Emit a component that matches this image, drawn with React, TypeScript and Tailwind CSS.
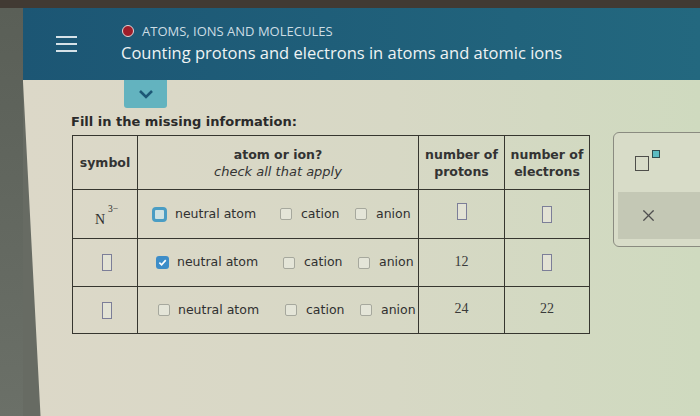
import { X } from "lucide-react";

const Box = () => (
  <div className="w-[10px] h-[17px] border-[1.5px] border-[#7c7e98] bg-[#e3e3d5]" />
);

const Unchecked = () => (
  <div className="w-[12px] h-[12px] rounded-[2px] border border-[#a6a89d] bg-[#e4e5d8]" />
);

const Checked = () => (
  <div className="w-[13px] h-[13px] rounded-[3px] bg-[#3d8dc8] flex items-center justify-center">
    <svg width="9" height="9" viewBox="0 0 10 10">
      <path d="M1.5 5.2 L4 7.6 L8.6 2.4" stroke="#fff" strokeWidth="1.8" fill="none" />
    </svg>
  </div>
);

const Focused = () => (
  <div className="w-[15px] h-[15px] -ml-[1px] rounded-[4px] border-[3px] border-[#4a9dc4] bg-[#cfe2e2]" />
);

const Options = ({ first }: { first: "checked" | "focused" | "none" }) => (
  <div className="flex items-center text-[12.5px] text-[#303030]">
    <div className="w-[127px] flex items-center gap-[8px]">
      {first === "checked" ? <Checked /> : first === "focused" ? <Focused /> : <Unchecked />}
      <span>neutral atom</span>
    </div>
    <div className="w-[75px] flex items-center gap-[9px]">
      <Unchecked />
      <span>cation</span>
    </div>
    <div className="flex items-center gap-[9px]">
      <Unchecked />
      <span>anion</span>
    </div>
  </div>
);

const Num = ({ v }: { v: string }) => (
  <span className="text-[14px] text-[#3a3a3a]" style={{ fontFamily: '"Liberation Serif", serif' }}>
    {v}
  </span>
);

export default function App() {
  const cell = "border border-[#36362f] p-0";
  return (
    <div
      className="w-[700px] h-[416px] overflow-hidden flex flex-col bg-[#6a6e66]"
      style={{ fontFamily: '"DejaVu Sans", Verdana, sans-serif' }}
    >
      <div className="h-[8px] shrink-0 bg-[#413a33]" />
      <div className="flex flex-1 min-h-0">
        <div className="w-[23px] shrink-0 bg-linear-to-b from-[#5a5f57] to-[#6b7068]" />
        <div className="flex-1 min-w-0 overflow-hidden flex flex-col">
          {/* header */}
          <header
            className="h-[72px] shrink-0 flex items-center pl-[33px] bg-linear-to-r from-[#1c5674] to-[#23687f]"
            style={{ fontFamily: '"Open Sans", sans-serif' }}
          >
            <div className="flex flex-col gap-[5px] w-[21px]">
              <div className="h-[2px] bg-[#d6e2e8]" />
              <div className="h-[2px] bg-[#d6e2e8]" />
              <div className="h-[2px] bg-[#d6e2e8]" />
            </div>
            <div className="ml-[45px] flex flex-col gap-[3px] -mt-[2px]">
              <div className="flex items-center leading-[16px]">
                <div className="w-[12px] h-[12px] rounded-full border-[1.5px] border-[#e6d6d6] bg-[#9e1d2a]" />
                <span className="ml-[8px] text-[13px] text-[#cddde4]">
                  ATOMS, IONS AND MOLECULES
                </span>
              </div>
              <div className="text-[16.5px] leading-[22px] text-[#eef3f4] -ml-[1px]">
                Counting protons and electrons in atoms and atomic ions
              </div>
            </div>
          </header>

          {/* content */}
          <main className="flex-1 flex flex-col bg-[linear-gradient(87deg,#676b63_17px,transparent_18px),linear-gradient(to_right,#dcd8c8,#d7d8c5_55%,#cfdabf)]">
            <div className="ml-[101px] w-[43px] h-[28px] rounded-b-[3px] bg-[#63b3bf] flex items-center justify-center">
              <svg width="16" height="10" viewBox="0 0 16 10">
                <path d="M2 2 L8 8 L14 2" stroke="#1d5876" strokeWidth="2.6" fill="none" />
              </svg>
            </div>
            <div className="ml-[48px] mt-[6px] text-[13px] leading-[16px] font-bold text-[#2a2a2a]">
              Fill in the missing information:
            </div>

            <div className="flex items-start ml-[49px] mt-[2px]">
              <table className="mt-[3px] w-[517px] shrink-0 table-fixed border-collapse text-[#333] text-center">
                <colgroup>
                  <col className="w-[65px]" />
                  <col className="w-[281px]" />
                  <col className="w-[86px]" />
                  <col className="w-[85px]" />
                </colgroup>
                <thead>
                  <tr className="h-[54px] text-[12.5px] font-bold leading-[17px]">
                    <th className={cell}>symbol</th>
                    <th className={cell}>
                      <div>atom or ion?</div>
                      <div className="italic font-normal text-[13px]">check all that apply</div>
                    </th>
                    <th className={`${cell} whitespace-nowrap`}>
                      number of
                      <br />
                      protons
                    </th>
                    <th className={`${cell} whitespace-nowrap`}>
                      number of
                      <br />
                      electrons
                    </th>
                  </tr>
                </thead>
                <tbody>
                  <tr className="h-[49px]">
                    <td className={cell}>
                      <div className="flex justify-center items-start pt-[4px] pl-[3px]" style={{ fontFamily: '"Liberation Serif", serif' }}>
                        <span className="text-[14px] text-[#2e2e2e] mt-[7px]">N</span>
                        <span className="text-[9.5px] ml-[3px] text-[#2e2e2e]">3−</span>
                      </div>
                    </td>
                    <td className={`${cell} pl-[15px]`}>
                      <Options first="focused" />
                    </td>
                    <td className={cell}>
                      <div className="flex justify-center -mt-[6px]">
                        <Box />
                      </div>
                    </td>
                    <td className={cell}>
                      <div className="flex justify-center">
                        <Box />
                      </div>
                    </td>
                  </tr>
                  <tr className="h-[48px]">
                    <td className={cell}>
                      <div className="flex justify-center pl-[3px]">
                        <Box />
                      </div>
                    </td>
                    <td className={`${cell} pl-[18px]`}>
                      <Options first="checked" />
                    </td>
                    <td className={cell}>
                      <div className="-mt-[4px]">
                        <Num v="12" />
                      </div>
                    </td>
                    <td className={cell}>
                      <div className="flex justify-center">
                        <Box />
                      </div>
                    </td>
                  </tr>
                  <tr className="h-[47px]">
                    <td className={cell}>
                      <div className="flex justify-center pl-[4px]">
                        <Box />
                      </div>
                    </td>
                    <td className={`${cell} pl-[20px]`}>
                      <Options first="none" />
                    </td>
                    <td className={cell}>
                      <div className="-mt-[4px]">
                        <Num v="24" />
                      </div>
                    </td>
                    <td className={cell}>
                      <div className="-mt-[4px]">
                        <Num v="22" />
                      </div>
                    </td>
                  </tr>
                </tbody>
              </table>

              {/* answer tools panel */}
              <div className="ml-[23px] w-[130px] shrink-0 rounded-[6px] border border-[#8a8b80] bg-[#d8dcc8] pt-[17px] pb-[7px]">
                <div className="ml-[21px] flex items-start h-[21px]">
                  <div className="mt-[6px] w-[14px] h-[15px] border-[1.5px] border-[#4e4e4a]" />
                  <div className="ml-[3px] w-[8px] h-[8px] border border-[#2f4d50] bg-[#5cbcc2]" />
                </div>
                <div className="mt-[21px] ml-[4px] h-[47px] bg-[#c4c8b5] flex items-center">
                  <div className="w-[61px] flex justify-center">
                    <X size={19} strokeWidth={1.5} color="#4e4e4e" />
                  </div>
                </div>
              </div>
            </div>
          </main>
        </div>
      </div>
    </div>
  );
}
